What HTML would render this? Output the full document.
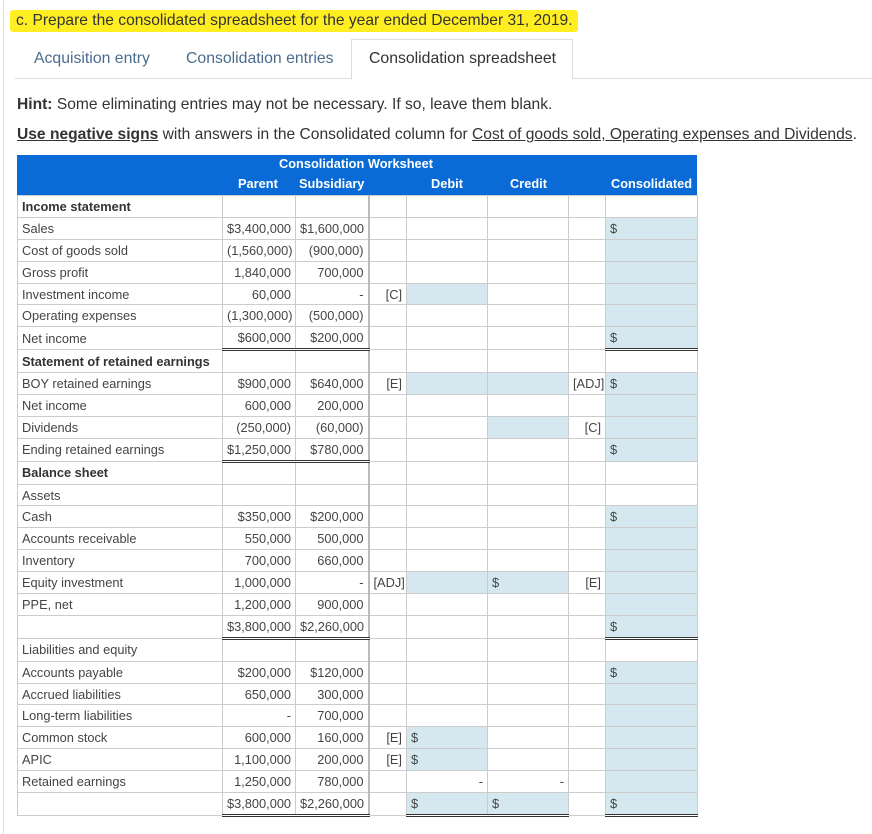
<!DOCTYPE html>
<html><head><meta charset="utf-8"><style>
body{margin:0;width:872px;height:834px;background:#fff;font-family:"Liberation Sans","DejaVu Sans",sans-serif;color:#333;position:relative;overflow:hidden}
.edge{position:absolute;left:3px;top:0;width:1px;height:834px;background:#ddd}
.title{position:absolute;left:10px;top:10px;width:568px;height:22px;background:#ffee22;border-radius:3px}
.title span{position:absolute;left:6px;top:2px;font-size:15.6px;color:#333;white-space:nowrap}
.tabline{position:absolute;left:15px;top:78px;width:857px;height:1px;background:#ddd}
.tab{position:absolute;top:50px;font-size:15.8px;color:#4b6b8e;white-space:nowrap}
.atab{position:absolute;left:351px;top:39px;width:220px;height:39px;border:1px solid #ddd;border-bottom:1px solid #fff;background:#fff}
.p{position:absolute;left:17px;font-size:15.6px;white-space:nowrap;color:#333}
.u{text-decoration:underline}
.hdr{position:absolute;left:17px;top:155px;width:680px;height:40px;background:#0b6bd6;color:#fff;font-weight:bold;font-size:12.8px}
.hdr span{position:absolute;white-space:nowrap}
table{position:absolute;left:17px;top:195px;width:680px;border-collapse:collapse;table-layout:fixed;font-size:12.8px}
td{height:20.9px;padding:0 4px;border:1px solid #ccc;white-space:nowrap;overflow:hidden;color:#444}
.r{text-align:right}
.b{font-weight:bold;color:#333}
.bl{background:#d5e8ef}
.tk{border-left:2px solid #bbb}
.t{border-top:1px solid #222}
.d{border-bottom:3px double #333}
</style></head><body>
<div class="edge"></div>
<div class="title"><span>c. Prepare the consolidated spreadsheet for the year ended December 31, 2019.</span></div>
<div class="tabline"></div>
<div class="atab"></div>
<div class="tab" style="left:34px">Acquisition entry</div>
<div class="tab" style="left:186px">Consolidation entries</div>
<div class="tab" style="left:369px;color:#333">Consolidation spreadsheet</div>
<div class="p" style="top:96px"><b>Hint:</b> Some eliminating entries may not be necessary. If so, leave them blank.</div>
<div class="p" style="top:126px"><b class="u">Use negative signs</b> with answers in the Consolidated column for <span class="u">Cost of goods sold, Operating expenses and Dividends</span>.</div>
<div class="hdr">
<span style="left:262px;top:1px">Consolidation Worksheet</span>
<span style="left:221px;top:21px">Parent</span>
<span style="left:282px;top:21px">Subsidiary</span>
<span style="left:414px;top:21px">Debit</span>
<span style="left:493px;top:21px">Credit</span>
<span style="left:594px;top:21px">Consolidated</span>
</div>
<table>
<colgroup><col style="width:205px"><col style="width:73px"><col style="width:73px"><col style="width:38px"><col style="width:81px"><col style="width:81px"><col style="width:37px"><col style="width:92px"></colgroup>
<tr><td class="b">Income statement</td><td></td><td></td><td class="tk"></td><td></td><td></td><td></td><td></td></tr>
<tr><td>Sales</td><td class="r">$3,400,000</td><td class="r">$1,600,000</td><td class="tk"></td><td></td><td></td><td></td><td class="bl">$</td></tr>
<tr><td>Cost of goods sold</td><td class="r">(1,560,000)</td><td class="r">(900,000)</td><td class="tk"></td><td></td><td></td><td></td><td class="bl"></td></tr>
<tr><td>Gross profit</td><td class="r t">1,840,000</td><td class="r t">700,000</td><td class="tk"></td><td></td><td></td><td></td><td class="bl t"></td></tr>
<tr><td>Investment income</td><td class="r">60,000</td><td class="r">-</td><td class="tk r">[C]</td><td class="bl"></td><td></td><td></td><td class="bl"></td></tr>
<tr><td>Operating expenses</td><td class="r">(1,300,000)</td><td class="r">(500,000)</td><td class="tk"></td><td></td><td></td><td></td><td class="bl"></td></tr>
<tr><td>Net income</td><td class="r t d">$600,000</td><td class="r t d">$200,000</td><td class="tk"></td><td></td><td></td><td></td><td class="bl t d">$</td></tr>
<tr><td class="b">Statement of retained earnings</td><td></td><td></td><td class="tk"></td><td></td><td></td><td></td><td></td></tr>
<tr><td>BOY retained earnings</td><td class="r">$900,000</td><td class="r">$640,000</td><td class="tk r">[E]</td><td class="bl"></td><td class="bl"></td><td class="r">[ADJ]</td><td class="bl">$</td></tr>
<tr><td>Net income</td><td class="r">600,000</td><td class="r">200,000</td><td class="tk"></td><td></td><td></td><td></td><td class="bl"></td></tr>
<tr><td>Dividends</td><td class="r">(250,000)</td><td class="r">(60,000)</td><td class="tk"></td><td></td><td class="bl"></td><td class="r">[C]</td><td class="bl"></td></tr>
<tr><td>Ending retained earnings</td><td class="r t d">$1,250,000</td><td class="r t d">$780,000</td><td class="tk"></td><td></td><td></td><td></td><td class="bl t">$</td></tr>
<tr><td class="b">Balance sheet</td><td></td><td></td><td class="tk"></td><td></td><td></td><td></td><td></td></tr>
<tr><td>Assets</td><td></td><td></td><td class="tk"></td><td></td><td></td><td></td><td></td></tr>
<tr><td>Cash</td><td class="r">$350,000</td><td class="r">$200,000</td><td class="tk"></td><td></td><td></td><td></td><td class="bl">$</td></tr>
<tr><td>Accounts receivable</td><td class="r">550,000</td><td class="r">500,000</td><td class="tk"></td><td></td><td></td><td></td><td class="bl"></td></tr>
<tr><td>Inventory</td><td class="r">700,000</td><td class="r">660,000</td><td class="tk"></td><td></td><td></td><td></td><td class="bl"></td></tr>
<tr><td>Equity investment</td><td class="r">1,000,000</td><td class="r">-</td><td class="tk r">[ADJ]</td><td class="bl"></td><td class="bl">$</td><td class="r">[E]</td><td class="bl"></td></tr>
<tr><td>PPE, net</td><td class="r">1,200,000</td><td class="r">900,000</td><td class="tk"></td><td></td><td></td><td></td><td class="bl"></td></tr>
<tr><td></td><td class="r t d">$3,800,000</td><td class="r t d">$2,260,000</td><td class="tk"></td><td></td><td></td><td></td><td class="bl t d">$</td></tr>
<tr><td>Liabilities and equity</td><td></td><td></td><td class="tk"></td><td></td><td></td><td></td><td></td></tr>
<tr><td>Accounts payable</td><td class="r">$200,000</td><td class="r">$120,000</td><td class="tk"></td><td></td><td></td><td></td><td class="bl">$</td></tr>
<tr><td>Accrued liabilities</td><td class="r">650,000</td><td class="r">300,000</td><td class="tk"></td><td></td><td></td><td></td><td class="bl"></td></tr>
<tr><td>Long-term liabilities</td><td class="r">-</td><td class="r">700,000</td><td class="tk"></td><td></td><td></td><td></td><td class="bl"></td></tr>
<tr><td>Common stock</td><td class="r">600,000</td><td class="r">160,000</td><td class="tk r">[E]</td><td class="bl">$</td><td></td><td></td><td class="bl"></td></tr>
<tr><td>APIC</td><td class="r">1,100,000</td><td class="r">200,000</td><td class="tk r">[E]</td><td class="bl">$</td><td></td><td></td><td class="bl"></td></tr>
<tr><td>Retained earnings</td><td class="r">1,250,000</td><td class="r">780,000</td><td class="tk"></td><td class="r">-</td><td class="r">-</td><td></td><td class="bl"></td></tr>
<tr><td></td><td class="r t d">$3,800,000</td><td class="r t d">$2,260,000</td><td class="tk"></td><td class="bl t d">$</td><td class="bl t d">$</td><td></td><td class="bl t d">$</td></tr>
</table>
</body></html>
